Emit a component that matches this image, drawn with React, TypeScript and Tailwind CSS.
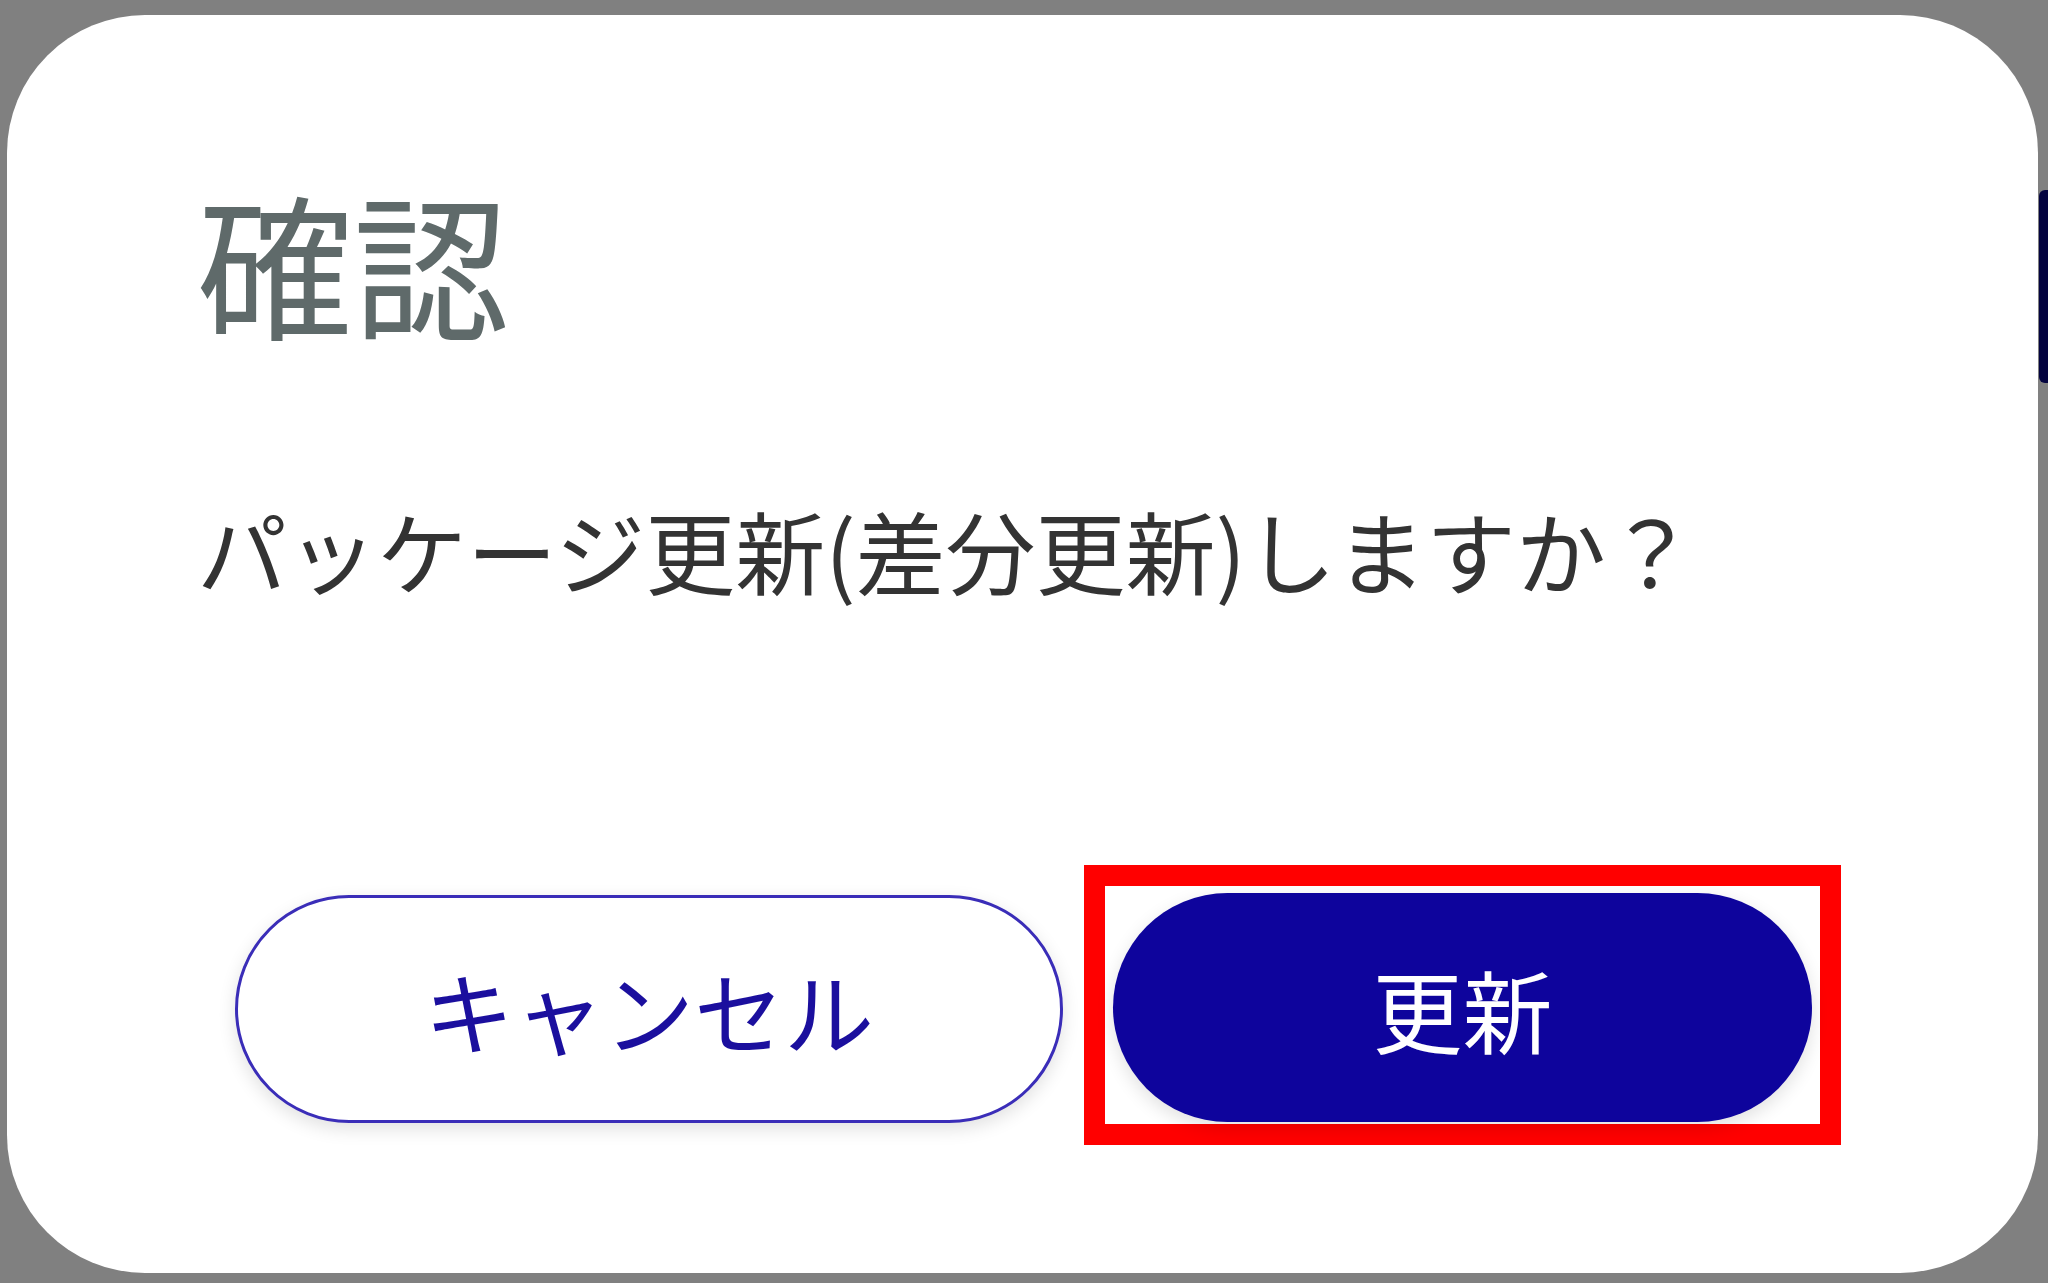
export default function App() {
  return (
    <div className="relative h-[1283px] w-[2048px] overflow-hidden bg-[#808080] pl-[7px] pt-[15px] font-['Noto_Sans_CJK_JP',sans-serif]">
      {/* edge of the navy element behind the overlay */}
      <div className="absolute left-[2039px] top-[190px] h-[193px] w-[20px] rounded-l-[6px] bg-[#03033f]" />

      <div className="flex h-[1258px] w-[2031px] flex-col rounded-[138px] bg-white pl-[190px] pt-[167px]">
        <h2 className="text-[156px] font-normal leading-none text-[#5f6a6a]">確認</h2>

        <p className="mt-[166px] text-[90px] leading-none text-[#333333]">
          パッケージ更新(差分更新)しますか？
        </p>

        <div className="ml-[38px] mt-[271px] flex items-start gap-[21px]">
          <button
            type="button"
            className="mt-[30px] flex h-[228px] w-[828px] items-center justify-center rounded-full border-[3px] border-[#3a2db8] bg-white text-[90px] leading-none text-[#1b0f9e] shadow-[0_6px_18px_rgba(0,0,0,0.12)]"
          >
            キャンセル
          </button>

          <div className="border-[21px] border-[#ff0000] pb-[2px] pl-[8px] pr-[8px] pt-[7px]">
            <button
              type="button"
              className="flex h-[229px] w-[699px] items-center justify-center rounded-full bg-[#0e049c] text-[90px] leading-none text-white shadow-[0_6px_18px_rgba(0,0,0,0.12)]"
            >
              更新
            </button>
          </div>
        </div>
      </div>
    </div>
  )
}
